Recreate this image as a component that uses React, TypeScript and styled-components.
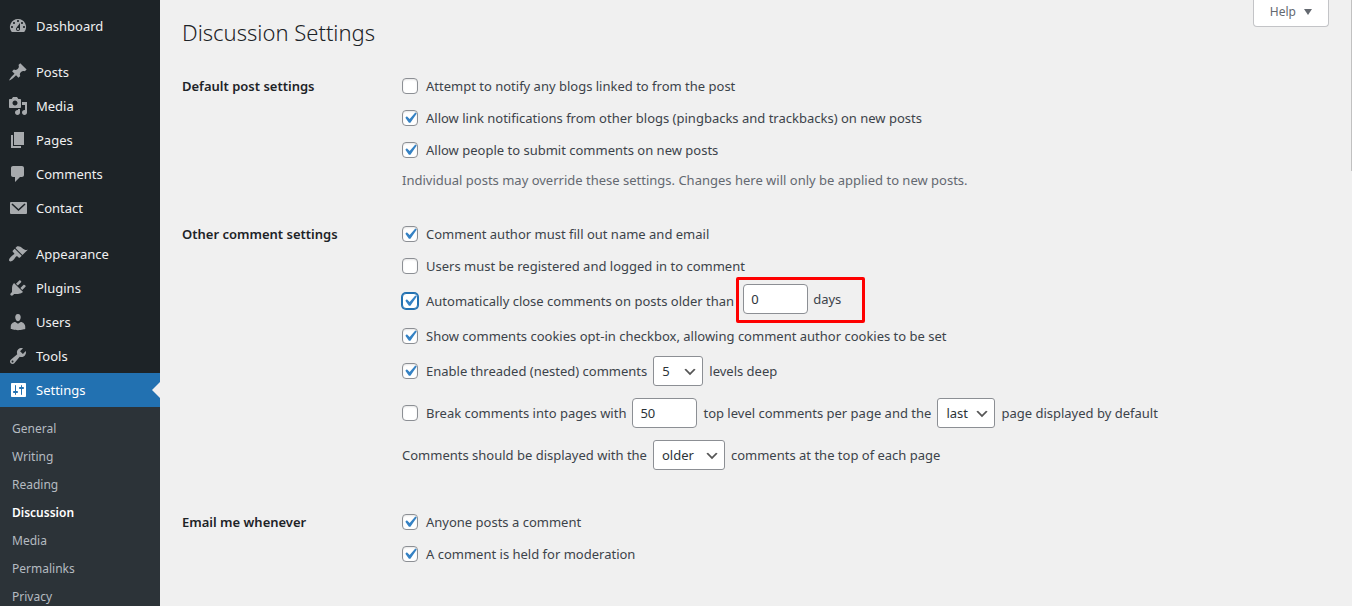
import React, { useId } from "react";
import styled, { createGlobalStyle, css } from "styled-components";

const GlobalStyle = createGlobalStyle`
  *, *::before, *::after { box-sizing: border-box; }
  body {
    margin: 0;
    background: #f0f0f0;
    color: #3c434a;
    font-family: "Noto Sans", "Open Sans", sans-serif;
    font-size: 13px;
    line-height: 20px;
  }
`;

const Shell = styled.div`
  position: relative;
  display: flex;
  height: 100vh;
  overflow: hidden;
`;

const Sidebar = styled.nav`
  flex: 0 0 160px;
  padding-top: 9px;
  background: #1d2327;
`;

const MenuList = styled.ul`
  margin: 0;
  padding: 0;
  list-style: none;
`;

const MenuItem = styled.li<{ $spaced?: boolean }>`
  margin-top: ${(p) => (p.$spaced ? "12px" : "0")};
`;

const MenuLink = styled.a<{ $active?: boolean }>`
  position: relative;
  display: flex;
  align-items: center;
  gap: 8px;
  height: 34px;
  padding-left: 8px;
  color: ${(p) => (p.$active ? "#fff" : "#f0f0f1")};
  background: ${(p) => (p.$active ? "#2271b1" : "transparent")};
  text-decoration: none;

  svg {
    width: 20px;
    height: 20px;
    fill: ${(p) => (p.$active ? "#fff" : "#a7aaad")};
  }

  ${(p) =>
    p.$active &&
    css`
      &::after {
        content: "";
        position: absolute;
        top: 9px;
        right: 0;
        border: 8px solid transparent;
        border-left-width: 0;
        border-right-color: #f0f0f0;
      }
    `}
`;

const SubMenu = styled.ul`
  margin: 0;
  padding: 8px 0;
  list-style: none;
  background: #2c3338;
`;

const SubLink = styled.a<{ $current?: boolean }>`
  display: block;
  padding: 4px 12px;
  color: ${(p) => (p.$current ? "#fff" : "#b5bbc1")};
  font-size: 12px;
  font-weight: ${(p) => (p.$current ? 600 : 400)};
  text-decoration: none;
`;

const Main = styled.main`
  flex: 1;
  min-width: 0;
  padding: 0 23px 0 22px;
`;

const TopBar = styled.header`
  display: flex;
  justify-content: space-between;
  align-items: flex-start;
  height: 74px;
`;

const Title = styled.h1`
  margin: 0;
  padding-top: 16px;
  color: #1d2327;
  font-size: 22px;
  font-weight: 300;
  line-height: 32px;
`;

const HelpButton = styled.button`
  display: flex;
  align-items: center;
  gap: 8px;
  height: 27px;
  padding: 0 16px 3px;
  border: 1px solid #c3c4c7;
  border-top: 0;
  border-radius: 0 0 4px 4px;
  background: #fff;
  color: #646970;
  font: inherit;
  font-size: 12px;
`;

const Section = styled.section`
  display: grid;
  grid-template-columns: 220px minmax(0, 1fr);
  margin-bottom: 32px;
`;

const SectionTitle = styled.h2`
  margin: 0;
  padding-top: 2px;
  color: #1d2327;
  font-size: 13px;
  font-weight: 600;
  line-height: 20px;
`;

const Options = styled.div`
  display: flex;
  flex-direction: column;
  gap: 8px;
`;

const FieldRows = styled.div`
  display: flex;
  flex-direction: column;
  gap: 12px;
  margin-bottom: 8px;
`;

const Row = styled.div<{ $field?: boolean }>`
  display: flex;
  align-items: center;
  gap: 6px;
  height: ${(p) => (p.$field ? "30px" : "24px")};
  white-space: nowrap;
`;

const Description = styled.p`
  margin: 0;
  color: #646970;
`;

const CheckLabel = styled.label`
  display: inline-flex;
  align-items: center;
  gap: 8px;
`;

const CheckBoxFrame = styled.span`
  position: relative;
  display: flex;
  width: 16px;
  height: 16px;

  svg {
    position: absolute;
    top: -3px;
    left: -3px;
    width: 22px;
    height: 22px;
    fill: #3582c4;
    pointer-events: none;
    visibility: hidden;
  }

  input:checked + svg {
    visibility: visible;
  }
`;

const CheckInput = styled.input<{ $focused?: boolean }>`
  appearance: none;
  width: 16px;
  height: 16px;
  margin: 0;
  border: 1px solid ${(p) => (p.$focused ? "#2271b1" : "#8c8f94")};
  border-radius: 4px;
  background: #fff;
  box-shadow: ${(p) => (p.$focused ? "0 0 0 1px #2271b1" : "inset 0 1px 2px rgba(0, 0, 0, 0.1)")};
`;

const NumberInput = styled.input`
  width: 65px;
  height: 30px;
  padding: 0 7px;
  border: 1px solid #8c8f94;
  border-radius: 4px;
  background: #fff;
  color: #2c3338;
  font: inherit;
`;

const SelectFrame = styled.span<{ $width: number }>`
  position: relative;
  width: ${(p) => p.$width}px;
  height: 30px;

  svg {
    position: absolute;
    top: 8px;
    right: 5px;
    width: 16px;
    height: 16px;
    pointer-events: none;
  }
`;

const SelectInput = styled.select`
  appearance: none;
  width: 100%;
  height: 30px;
  padding: 0 8px;
  border: 1px solid #8c8f94;
  border-radius: 3px;
  background: #fff;
  color: #2c3338;
  font: inherit;
`;

const Highlight = styled.span`
  z-index: 1;
  display: flex;
  align-items: center;
  gap: 5px;
  margin: -9px 0 -7px -4px;
  padding: 4px 21px 6px 4px;
  border: 3px solid #fe0000;
  border-radius: 2px;
  background: #f0f0f0;
`;

const ScrollThumb = styled.div`
  position: absolute;
  top: 0;
  right: 0;
  width: 1px;
  height: 171px;
  background: #c1c1c1;
`;

type MenuEntry = { name: string; icon: React.ReactNode; spaced?: boolean; active?: boolean };

const menu: MenuEntry[] = [
  {
    name: "Dashboard",
    icon: <path d="M3.76 16h12.48A7.998 7.998 0 0 0 10 3a7.998 7.998 0 0 0-6.24 13zM10 4c.55 0 1 .45 1 1s-.45 1-1 1-1-.45-1-1 .45-1 1-1zM6 6c.55 0 1 .45 1 1s-.45 1-1 1-1-.45-1-1 .45-1 1-1zm8 0c.55 0 1 .45 1 1s-.45 1-1 1-1-.45-1-1 .45-1 1-1zm-5.37 5.55L12 7v6c0 1.1-.9 2-2 2s-2-.9-2-2c0-.57.24-1.08.63-1.45zM4 10c.55 0 1 .45 1 1s-.45 1-1 1-1-.45-1-1 .45-1 1-1zm12 0c.55 0 1 .45 1 1s-.45 1-1 1-1-.45-1-1 .45-1 1-1zm-5 3c0-.55-.45-1-1-1s-1 .45-1 1 .45 1 1 1 1-.45 1-1z" />,
  },
  {
    name: "Posts",
    spaced: true,
    icon: <path d="M10.44 3.02l1.82-1.82 6.36 6.35-1.83 1.82c-1.05-.68-2.48-.57-3.41.36l-.75.75c-.92.93-1.04 2.35-.35 3.41l-1.83 1.82-2.41-2.41-2.8 2.79c-.42.42-3.38 2.71-3.8 2.29s1.86-3.39 2.28-3.81l2.79-2.79L4.1 9.36l1.83-1.82c1.05.69 2.48.57 3.4-.36l.75-.75c.93-.92 1.05-2.35.36-3.41z" />,
  },
  {
    name: "Media",
    icon: <path d="M13 11V4c0-.55-.45-1-1-1h-1.67L9 1H5L3.67 3H2c-.55 0-1 .45-1 1v7c0 .55.45 1 1 1h10c.55 0 1-.45 1-1zM7 4.5c1.38 0 2.5 1.12 2.5 2.5S8.38 9.5 7 9.5 4.5 8.38 4.5 7 5.62 4.5 7 4.5zM14 6h5v10.5c0 1.38-1.12 2.5-2.5 2.5S14 17.88 14 16.5s1.12-2.5 2.5-2.5c.17 0 .34.02.5.05V9h-3V6zm-4 8.05V13h2v3.5c0 1.38-1.12 2.5-2.5 2.5S7 17.88 7 16.5 8.12 14 9.5 14c.17 0 .34.02.5.05z" />,
  },
  { name: "Pages", icon: <path d="M6 15V2h10v13H6zm-1 1h8v2H3V5h2v11z" /> },
  {
    name: "Comments",
    icon: <path d="M5 2h9c1.1 0 2 .9 2 2v7c0 1.1-.9 2-2 2h-2l-5 5v-5H5c-1.1 0-2-.9-2-2V4c0-1.1.9-2 2-2z" />,
  },
  {
    name: "Contact",
    icon: (
      <>
        <rect x="2" y="4" width="17" height="12" rx="1" />
        <path d="M4 6l6.5 6L17 6" style={{ fill: "none" }} stroke="#1d2327" strokeWidth="1.6" />
      </>
    ),
  },
  {
    name: "Appearance",
    spaced: true,
    icon: <path d="M14.48 11.06L7.41 3.99l1.5-1.5c.5-.56 2.3-.47 3.51.32 1.21.8 1.43 1.28 2.91 2.1 1.18.64 2.45 1.26 4.45.85zm-.71.71L6.7 4.7 4.93 6.47c-.39.39-.39 1.02 0 1.41l1.06 1.06c.39.39.39 1.03 0 1.42-.6.6-1.43 1.11-2.21 1.69-.35.26-.7.53-1.01.84C1.43 14.23.4 16.08 1.4 17.07c.99 1 2.84-.03 4.18-1.36.31-.31.58-.66.85-1.02.57-.78 1.08-1.61 1.69-2.21.39-.39 1.02-.39 1.41 0l1.06 1.06c.39.39 1.02.39 1.41 0z" />,
  },
  {
    name: "Plugins",
    icon: <path d="M13.11 4.36L9.87 7.6 8 5.73l3.24-3.24c.35-.34 1.05-.2 1.56.32.52.51.66 1.21.31 1.55zm-8 1.77l.91-1.12 9.01 9.01-1.19.84c-.71.71-2.63 1.16-3.82 1.16H6.14L4.9 17.26c-.59.59-1.54.59-2.12 0-.59-.58-.59-1.53 0-2.12l1.24-1.24v-3.88c0-1.13.4-3.19 1.09-3.89zm7.26 3.97l3.24-3.24c.34-.35 1.04-.21 1.55.31.52.51.66 1.21.31 1.55l-3.24 3.25z" />,
  },
  {
    name: "Users",
    icon: <path d="M10 9.25c-2.27 0-2.73-3.44-2.73-3.44C7 4.02 7.82 2 9.97 2c2.16 0 2.98 2.02 2.71 3.81 0 0-.41 3.44-2.68 3.44zm0 2.57L12.72 10c2.39 0 4.52 2.33 4.52 4.53v2.49s-3.65 1.13-7.24 1.13c-3.65 0-7.24-1.13-7.24-1.13v-2.49c0-2.25 1.94-4.48 4.47-4.48z" />,
  },
  {
    name: "Tools",
    icon: <path d="M16.68 9.77c-1.34 1.34-3.3 1.67-4.95.99l-5.41 6.52c-.99.99-2.59.99-3.58 0s-.99-2.59 0-3.57l6.52-5.42c-.68-1.65-.35-3.61.99-4.95 1.28-1.28 3.12-1.62 4.72-1.06l-2.89 2.89 2.82 2.82 2.86-2.87c.53 1.58.18 3.39-1.08 4.65zM3.81 16.21c.4.39 1.04.39 1.43 0 .4-.4.4-1.04 0-1.43-.39-.4-1.03-.4-1.43 0-.39.39-.39 1.03 0 1.43z" />,
  },
  {
    name: "Settings",
    active: true,
    icon: <path d="M18 16V4c0-.55-.45-1-1-1H4c-.55 0-1 .45-1 1v12c0 .55.45 1 1 1h13c.55 0 1-.45 1-1zM8 11h1c.55 0 1 .45 1 1s-.45 1-1 1H8v1.5c0 .28-.22.5-.5.5s-.5-.22-.5-.5V13H6c-.55 0-1-.45-1-1s.45-1 1-1h1V5.5c0-.28.22-.5.5-.5s.5.22.5.5V11zm5-2h-1c-.55 0-1-.45-1-1s.45-1 1-1h1V5.5c0-.28.22-.5.5-.5s.5.22.5.5V7h1c.55 0 1 .45 1 1s-.45 1-1 1h-1v5.5c0 .28-.22.5-.5.5s-.5-.22-.5-.5V9z" />,
  },
];

const subMenu = ["General", "Writing", "Reading", "Discussion", "Media", "Permalinks", "Privacy"];

function Check({ children, checked, focused }: { children: string; checked?: boolean; focused?: boolean }) {
  const id = useId();
  return (
    <CheckLabel htmlFor={id}>
      <CheckBoxFrame>
        <CheckInput id={id} type="checkbox" defaultChecked={checked} $focused={focused} />
        <svg viewBox="0 0 20 20" aria-hidden="true">
          <path d="M14.83 4.89l1.34.94-5.81 8.38H9.02L5.78 9.67l1.34-1.25 2.57 2.4z" />
        </svg>
      </CheckBoxFrame>
      {children}
    </CheckLabel>
  );
}

type SelectProps = { id: string; width: number; value: string; options: string[] };

function Select({ id, width, value, options }: SelectProps) {
  return (
    <SelectFrame $width={width}>
      <SelectInput id={id} defaultValue={value}>
        {options.map((o) => (
          <option key={o}>{o}</option>
        ))}
      </SelectInput>
      <svg viewBox="0 0 20 20" aria-hidden="true">
        <path d="M5 6l5 5 5-5 2 1-7 7-7-7 2-1z" fill="#555" />
      </svg>
    </SelectFrame>
  );
}

export default function App() {
  return (
    <>
      <GlobalStyle />
      <Shell>
        <Sidebar aria-label="Main menu">
          <MenuList>
            {menu.map((m) => (
              <MenuItem key={m.name} $spaced={m.spaced}>
                <MenuLink href="#" $active={m.active}>
                  <svg viewBox="0 0 20 20" aria-hidden="true">{m.icon}</svg>
                  {m.name}
                </MenuLink>
                {m.active && (
                  <SubMenu>
                    {subMenu.map((s) => (
                      <li key={s}>
                        <SubLink href="#" $current={s === "Discussion"}>{s}</SubLink>
                      </li>
                    ))}
                  </SubMenu>
                )}
              </MenuItem>
            ))}
          </MenuList>
        </Sidebar>
        <Main>
          <TopBar>
            <Title>Discussion Settings</Title>
            <HelpButton type="button">
              Help
              <svg width="8" height="6" viewBox="0 0 8 6" aria-hidden="true">
                <path d="M0 0h8L4 6z" fill="#646970" />
              </svg>
            </HelpButton>
          </TopBar>

          <Section>
            <SectionTitle>Default post settings</SectionTitle>
            <Options>
              <Row><Check>Attempt to notify any blogs linked to from the post</Check></Row>
              <Row><Check checked>Allow link notifications from other blogs (pingbacks and trackbacks) on new posts</Check></Row>
              <Row><Check checked>Allow people to submit comments on new posts</Check></Row>
              <Description>Individual posts may override these settings. Changes here will only be applied to new posts.</Description>
            </Options>
          </Section>

          <Section>
            <SectionTitle>Other comment settings</SectionTitle>
            <Options>
              <Row><Check checked>Comment author must fill out name and email</Check></Row>
              <Row><Check>Users must be registered and logged in to comment</Check></Row>
              <Row $field>
                <Check checked focused>Automatically close comments on posts older than</Check>
                <Highlight>
                  <NumberInput id="close-days" defaultValue="0" />
                  <label htmlFor="close-days">days</label>
                </Highlight>
              </Row>
              <Row><Check checked>Show comments cookies opt-in checkbox, allowing comment author cookies to be set</Check></Row>
              <FieldRows>
                <Row $field>
                  <Check checked>Enable threaded (nested) comments</Check>
                  <Select id="depth" width={50} value="5" options={["2", "3", "4", "5", "6", "7", "8", "9", "10"]} />
                  <label htmlFor="depth">levels deep</label>
                </Row>
                <Row $field>
                  <Check>Break comments into pages with</Check>
                  <NumberInput id="per-page" defaultValue="50" />
                  <label htmlFor="per-page">top level comments per page and the</label>
                  <Select id="default-page" width={58} value="last" options={["last", "first"]} />
                  <label htmlFor="default-page">page displayed by default</label>
                </Row>
                <Row $field>
                  <label htmlFor="order">Comments should be displayed with the</label>
                  <Select id="order" width={72} value="older" options={["older", "newer"]} />
                  <span>comments at the top of each page</span>
                </Row>
              </FieldRows>
            </Options>
          </Section>

          <Section>
            <SectionTitle>Email me whenever</SectionTitle>
            <Options>
              <Row><Check checked>Anyone posts a comment</Check></Row>
              <Row><Check checked>A comment is held for moderation</Check></Row>
            </Options>
          </Section>
        </Main>
        <ScrollThumb />
      </Shell>
    </>
  );
}
